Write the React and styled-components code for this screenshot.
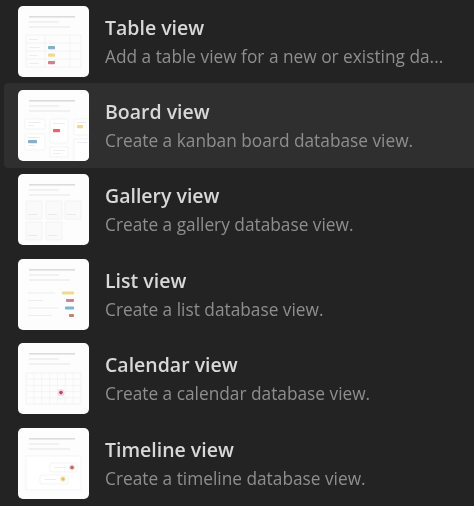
import React from "react";
import styled, { createGlobalStyle } from "styled-components";

const Global = createGlobalStyle`
  html, body { margin: 0; padding: 0; background: #232323; overflow: hidden; }
  body { width: 474px; height: 506px; }
`;

const List = styled.div`
  display: flex;
  flex-direction: column;
  margin-top: -1px;
  padding-left: 4px;
  font-family: "Open Sans", "Noto Sans", sans-serif;
`;

const Row = styled.div`
  display: flex;
  align-items: center;
  gap: 16px;
  height: 84.4px;
  padding-left: 14px;
  box-sizing: border-box;
  border-radius: 4px 0 0 4px;
  background: ${(p) => (p.$active ? "#2f2f2f" : "transparent")};
`;

const Thumb = styled.svg`
  flex: none;
  width: 71px;
  height: 71px;
  background: #fdfdfd;
  border-radius: 5px;
  filter: blur(0.5px);
`;

const Texts = styled.div`
  min-width: 0;
  flex: 1;
  display: flex;
  flex-direction: column;
  gap: 4px;
  padding-top: 1px;
  filter: blur(0.45px);
`;

const Title = styled.div`
  color: #d8d8d8;
  font-size: 19.5px;
  line-height: 26px;
  font-weight: 600;
`;

const Sub = styled.div`
  color: #8e8e8e;
  font-size: 17.3px;
  line-height: 24px;
  font-weight: 500;
  white-space: nowrap;
`;

const C = { line: "#efefef", head: "#dcdcdc", sub: "#e6e6e6", blue: "#7fb2cf", yellow: "#f0da90", red: "#cf8092", brown: "#c08478" };

const Heading = () => (
  <g>
    <rect x="11" y="10" width="46" height="1.6" fill={C.head} />
    <rect x="11" y="15.5" width="30" height="1" fill={C.sub} />
    <rect x="11" y="20.5" width="41" height="1" fill={C.sub} />
  </g>
);

const Box = ({ x, y, w, h }) => (
  <rect x={x} y={y} width={w} height={h} rx="1" fill="#fff" stroke={C.line} strokeWidth="0.7" />
);

const Pill = ({ x, y, w, c }) => <rect x={x} y={y} width={w} height="3.2" rx="0.8" fill={c} />;

const Name = ({ x, y, w }) => <rect x={x} y={y} width={w} height="0.9" fill="#ebebeb" />;

const TableArt = () => (
  <>
    {[29, 37, 45, 53, 61].map((y) => (
      <line key={y} x1="8" x2="63" y1={y} y2={y} stroke={C.line} strokeWidth="0.6" />
    ))}
    {[8, 27, 52, 63].map((x) => (
      <line key={x} x1={x} x2={x} y1="29" y2="61" stroke={C.line} strokeWidth="0.6" />
    ))}
    <Name x="11" y="33" w="9" />
    <Name x="11" y="41" w="11" />
    <Name x="11" y="49" w="8" />
    <Name x="11" y="57" w="10" />
    <Pill x="30" y="40" w="7" c={C.blue} />
    <Pill x="30" y="47.5" w="7" c={C.yellow} />
    <Pill x="30" y="55" w="7" c={C.red} />
  </>
);

const BoardArt = () => (
  <>
    <Box x="7" y="29" w="20" h="10" />
    <Name x="10" y="32" w="13" />
    <Name x="10" y="35" w="6" />
    <Box x="7" y="44" w="20" h="16" />
    <Name x="10" y="47" w="12" />
    <Pill x="10" y="50" w="9" c={C.blue} />
    <Name x="10" y="55" w="7" />
    <Box x="32" y="29" w="18" h="24" />
    <Name x="35" y="33" w="12" />
    <Pill x="35" y="39" w="7" c="#d46c72" />
    <Box x="32" y="57" w="18" h="10" />
    <Name x="35" y="60" w="12" />
    <Name x="35" y="63" w="7" />
    <Box x="56" y="29" w="18" h="16" />
    <Name x="59" y="32" w="10" />
    <Pill x="59" y="35" w="6" c={C.yellow} />
    <Box x="56" y="49" w="18" h="24" />
    <Name x="59" y="52" w="10" />
  </>
);

const GalleryArt = () => (
  <>
    {[[8, 27], [28, 27], [47, 27], [8, 48], [28, 48]].map(([x, y]) => (
      <g key={`${x}-${y}`}>
        <rect x={x} y={y} width="16" height="18" rx="1" fill="#fafafa" stroke={C.line} strokeWidth="0.6" />
        <rect x={x + 2} y={y + 13} width="9" height="0.8" fill="#e6e6e6" />
      </g>
    ))}
  </>
);

const ListArt = () => (
  <>
    <Name x="10" y="33.5" w="27" />
    <Pill x="44" y="32.4" w="12" c={C.yellow} />
    <Name x="10" y="41" w="15" />
    <Pill x="48" y="39.9" w="8" c={C.red} />
    <Name x="10" y="48.5" w="30" />
    <Pill x="47" y="47.4" w="9" c={C.blue} />
    <Name x="10" y="56" w="24" />
    <Pill x="51" y="54.9" w="5" c={C.brown} />
  </>
);

const CalendarArt = () => (
  <>
    {[0, 1, 2, 3, 4, 5].map((i) => (
      <line key={i} x1="8" x2="63" y1={30 + i * 6.2} y2={30 + i * 6.2} stroke={C.line} strokeWidth="0.6" />
    ))}
    {[0, 1, 2, 3, 4, 5, 6, 7].map((i) => (
      <line key={i} x1={8 + (i * 55) / 7} x2={8 + (i * 55) / 7} y1="30" y2="61" stroke={C.line} strokeWidth="0.6" />
    ))}
    <circle cx="43" cy="49.6" r="3.6" fill="#f8dde3" />
    <circle cx="43" cy="49.6" r="1.8" fill="#b8476a" />
  </>
);

const TimelineArt = () => (
  <>
    <rect x="8" y="28" width="55" height="34" fill="#fff" stroke={C.line} strokeWidth="0.7" />
    <rect x="32" y="35" width="27" height="9" rx="2" fill="#fff" stroke={C.line} strokeWidth="0.7" />
    <Name x="36" y="39" w="12" />
    <circle cx="54" cy="39.5" r="3" fill="#f3d9d9" />
    <circle cx="54" cy="39.5" r="1.7" fill="#b5666e" />
    <rect x="22" y="47" width="28" height="9" rx="2" fill="#fff" stroke={C.line} strokeWidth="0.7" />
    <Name x="26" y="51" w="12" />
    <circle cx="45" cy="51" r="3" fill="#fbeecb" />
    <circle cx="45" cy="51" r="1.7" fill="#e6bf63" />
  </>
);

const items = [
  { title: "Table view", sub: "Add a table view for a new or existing da...", Art: TableArt },
  { title: "Board view", sub: "Create a kanban board database view.", Art: BoardArt, active: true },
  { title: "Gallery view", sub: "Create a gallery database view.", Art: GalleryArt },
  { title: "List view", sub: "Create a list database view.", Art: ListArt },
  { title: "Calendar view", sub: "Create a calendar database view.", Art: CalendarArt },
  { title: "Timeline view", sub: "Create a timeline database view.", Art: TimelineArt },
];

export default function App() {
  return (
    <>
      <Global />
      <List>
        {items.map(({ title, sub, Art, active }) => (
          <Row key={title} $active={active}>
            <Thumb viewBox="0 0 71 71">
              <Heading />
              <Art />
            </Thumb>
            <Texts>
              <Title>{title}</Title>
              <Sub>{sub}</Sub>
            </Texts>
          </Row>
        ))}
      </List>
    </>
  );
}
